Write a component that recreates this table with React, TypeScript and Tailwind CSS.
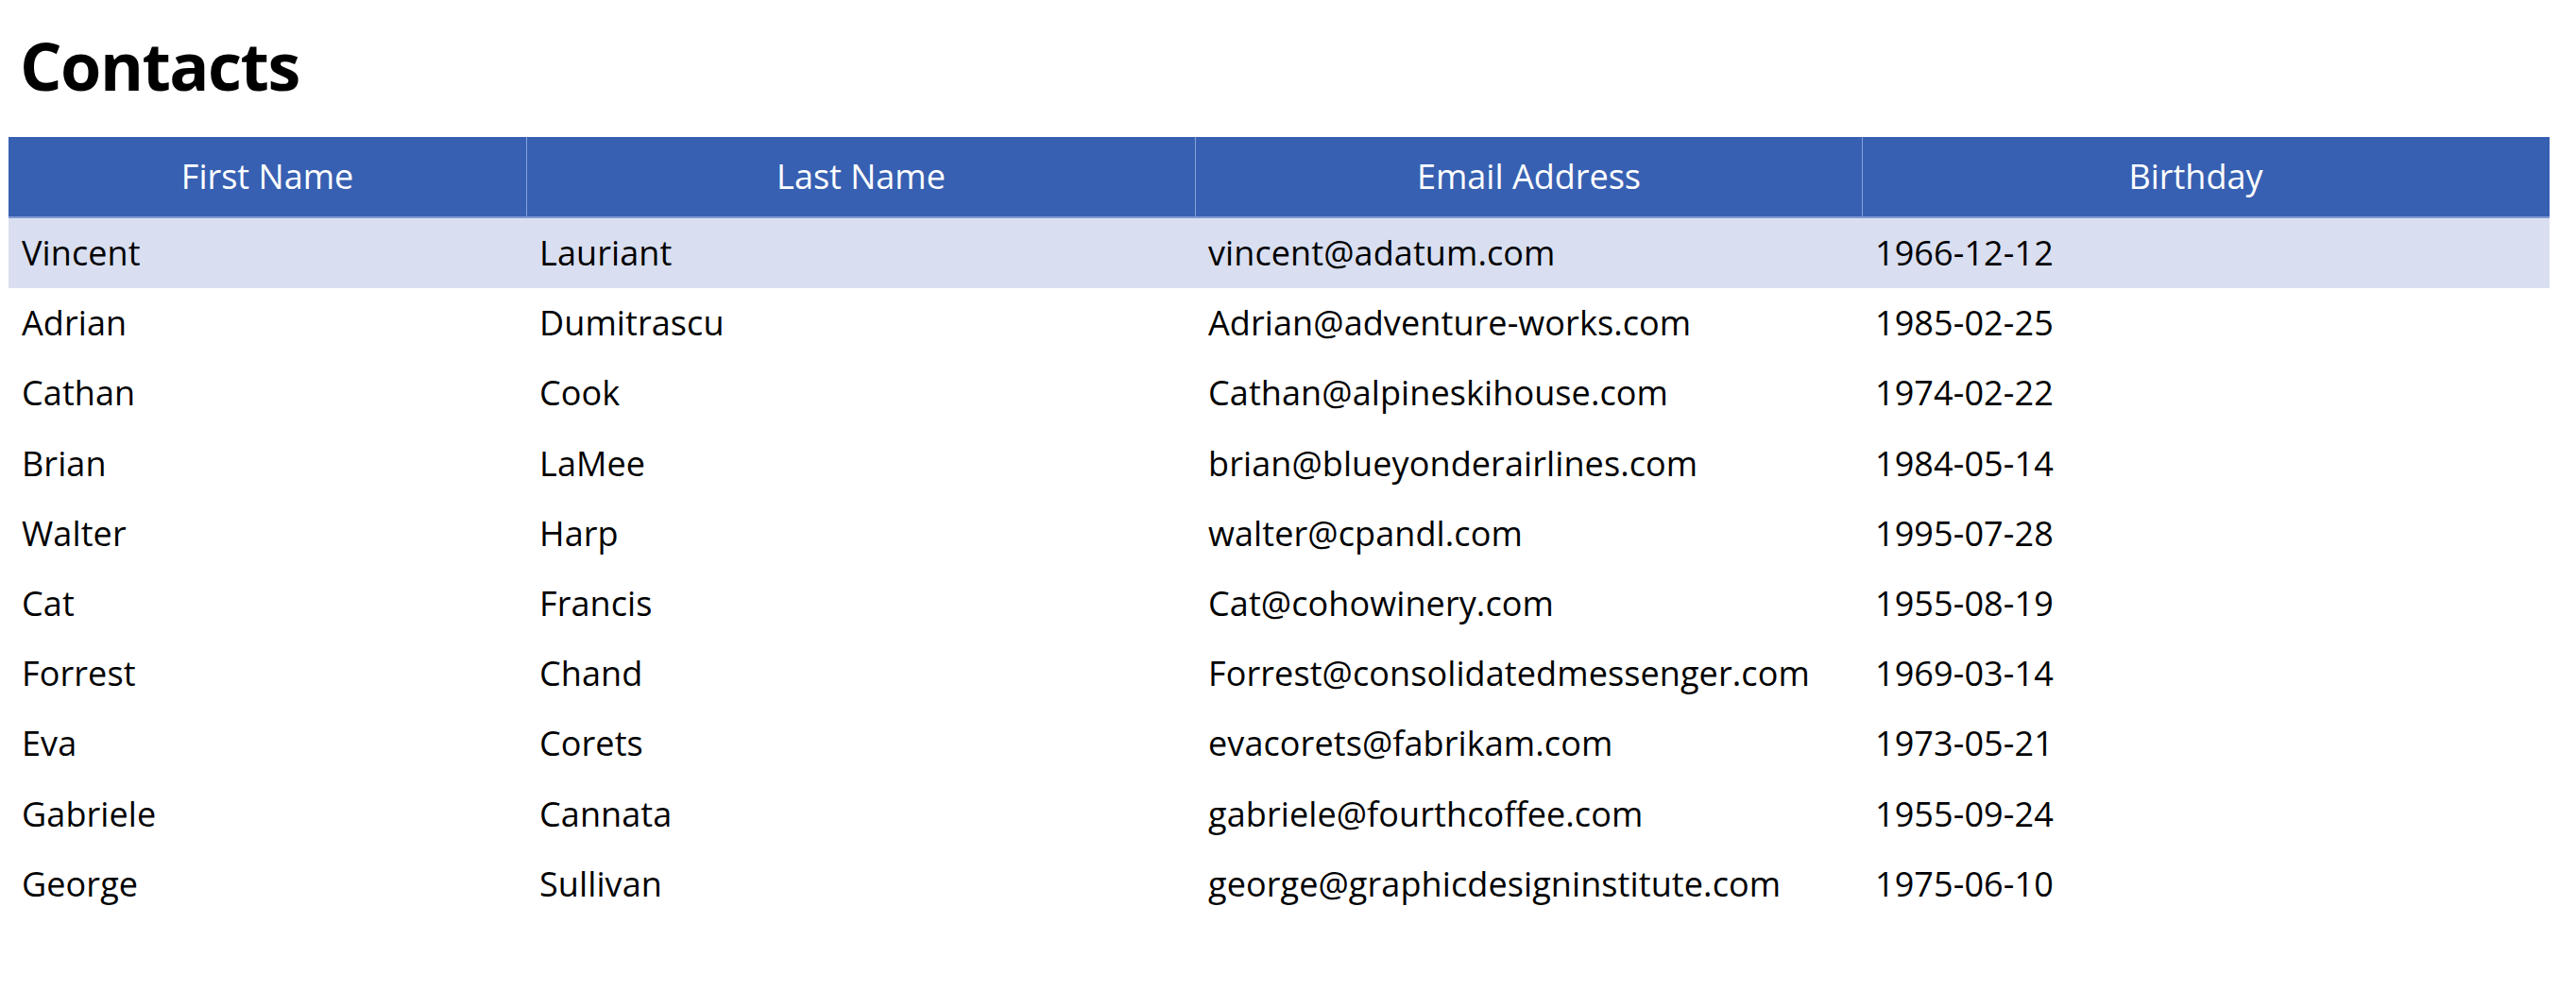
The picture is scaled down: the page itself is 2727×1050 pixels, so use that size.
const contacts = [
  { first: "Vincent", last: "Lauriant", email: "vincent@adatum.com", birthday: "1966-12-12" },
  { first: "Adrian", last: "Dumitrascu", email: "Adrian@adventure-works.com", birthday: "1985-02-25" },
  { first: "Cathan", last: "Cook", email: "Cathan@alpineskihouse.com", birthday: "1974-02-22" },
  { first: "Brian", last: "LaMee", email: "brian@blueyonderairlines.com", birthday: "1984-05-14" },
  { first: "Walter", last: "Harp", email: "walter@cpandl.com", birthday: "1995-07-28" },
  { first: "Cat", last: "Francis", email: "Cat@cohowinery.com", birthday: "1955-08-19" },
  { first: "Forrest", last: "Chand", email: "Forrest@consolidatedmessenger.com", birthday: "1969-03-14" },
  { first: "Eva", last: "Corets", email: "evacorets@fabrikam.com", birthday: "1973-05-21" },
  { first: "Gabriele", last: "Cannata", email: "gabriele@fourthcoffee.com", birthday: "1955-09-24" },
  { first: "George", last: "Sullivan", email: "george@graphicdesigninstitute.com", birthday: "1975-06-10" },
]

const columns = ["First Name", "Last Name", "Email Address", "Birthday"]

const headerCell = [
  "flex items-center justify-center",
  "flex items-center justify-center border-l border-[#8aa2d8]",
  "flex items-center justify-center border-l border-[#8aa2d8]",
  "flex items-center justify-center border-l border-[#8aa2d8] pr-[22px]",
]

export default function App() {
  return (
    <div className="min-h-[1050px] bg-white font-['Open_Sans',sans-serif] text-black">
      <h1 className="ml-[21px] pt-[34px] text-[70px] font-bold leading-none tracking-[-1.5px]">Contacts</h1>
      <div className="ml-[9px] mt-[41px] w-[2690px]">
        <div className="grid h-[86px] grid-cols-[548px_708px_706px_1fr] border-b-2 border-[#7e97d2] bg-[#3760b2] text-[36px] text-white">
          {columns.map((col, i) => (
            <div key={col} className={headerCell[i]}>
              {col}
            </div>
          ))}
        </div>
        {contacts.map((c, i) => (
          <div
            key={c.email}
            className={
              i === 0
                ? "grid h-[74.2px] grid-cols-[548px_708px_706px_1fr] items-center bg-[#d9dff0] text-[36px] tracking-[0.1px]"
                : "grid h-[74.2px] grid-cols-[548px_708px_706px_1fr] items-center text-[36px] tracking-[0.1px]"
            }
          >
            <div className="px-[14px]">{c.first}</div>
            <div className="px-[14px]">{c.last}</div>
            <div className="px-[14px]">{c.email}</div>
            <div className="px-[14px]">{c.birthday}</div>
          </div>
        ))}
      </div>
    </div>
  )
}
